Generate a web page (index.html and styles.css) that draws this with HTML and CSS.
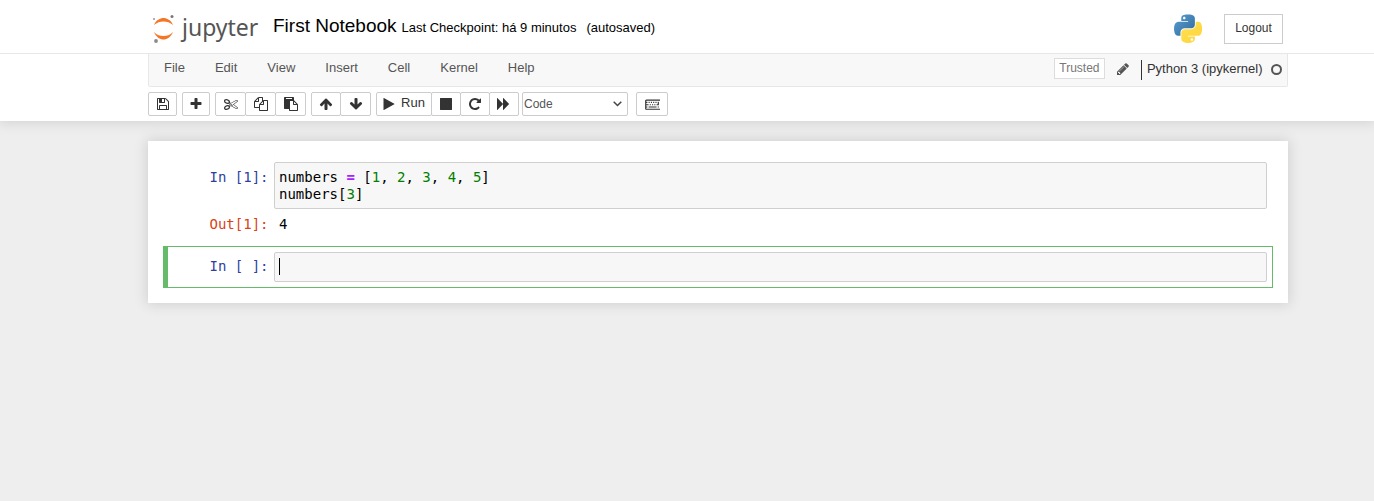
FILE: index.html
```html
<!DOCTYPE html>
<html lang="pt">
<head>
<meta charset="utf-8">
<title>First Notebook</title>
<link rel="stylesheet" href="styles.css">
</head>
<body>
<div class="top">
  <header class="header">
    <div class="wrap header-row">
      <div class="logo">
        <svg class="mark" viewBox="0 0 24 32" width="24" height="32">
          <path fill="#f37726" d="M4 14C6 9 10 7 13.500 7S21 9 23 14C20 11.500 17 10.500 13.500 10.500S7 11.500 4 14z"/>
          <path fill="#f37726" d="M4 21C7 24 10 25 13.500 25S20 24 23 21C21 26 17 28.500 13.500 28.500S6 26 4 21z"/>
          <circle cx="22" cy="5.500" r="1.500" fill="#767677"/>
          <circle cx="4" cy="8" r="1.100" fill="#9e9e9e"/>
          <circle cx="6" cy="30" r="1.900" fill="#8a8a8b"/>
        </svg>
        <span class="wordmark">jupyter</span>
      </div>
      <span class="filename">First Notebook</span>
      <span class="checkpoint">Last Checkpoint: há 9 minutos</span>
      <span class="autosave">(autosaved)</span>
      <svg class="python" viewBox="0 0 110.400 110" width="28" height="29">
        <defs>
          <linearGradient id="pyblue" x1="0" y1="0" x2="1" y2="1"><stop offset="0" stop-color="#5a9fd4"/><stop offset="1" stop-color="#306998"/></linearGradient>
          <linearGradient id="pyyellow" x1="0" y1="0" x2="1" y2="1"><stop offset="0" stop-color="#ffe052"/><stop offset="1" stop-color="#ffd43b"/></linearGradient>
        </defs>
        <path fill="url(#pyblue)" d="M54.919 0c-4.584.022-8.961.413-12.813 1.095C30.760 3.099 28.700 7.295 28.700 15.032v10.219h26.813v3.406H18.638c-7.793 0-14.616 4.684-16.750 13.594-2.462 10.213-2.571 16.586 0 27.250 1.906 7.938 6.457 13.594 14.250 13.594h9.219v-12.250c0-8.850 7.657-16.656 16.750-16.656h26.781c7.455 0 13.406-6.138 13.406-13.625v-25.531c0-7.266-6.130-12.725-13.406-13.937C64.282.328 59.502-.020 54.919 0zm-14.500 8.219c2.770 0 5.031 2.299 5.031 5.125 0 2.816-2.262 5.094-5.031 5.094-2.779 0-5.031-2.277-5.031-5.094 0-2.826 2.252-5.125 5.031-5.125z"/>
        <path fill="url(#pyyellow)" d="M85.638 28.657v11.906c0 9.231-7.826 17-16.750 17H42.107c-7.335 0-13.406 6.278-13.406 13.625v25.531c0 7.266 6.319 11.540 13.406 13.625 8.487 2.496 16.626 2.947 26.781 0 6.750-1.954 13.406-5.888 13.406-13.625V86.501H55.513v-3.406h40.188c7.793 0 10.696-5.436 13.406-13.594 2.799-8.399 2.680-16.476 0-27.250-1.926-7.757-5.604-13.594-13.406-13.594H85.638zM70.575 93.313c2.779 0 5.031 2.277 5.031 5.094 0 2.826-2.252 5.125-5.031 5.125-2.770 0-5.031-2.299-5.031-5.125 0-2.816 2.262-5.094 5.031-5.094z"/>
      </svg>
      <button class="logout" type="button">Logout</button>
    </div>
  </header>
  <nav class="wrap menubar">
    <span class="menu-item">File</span>
    <span class="menu-item">Edit</span>
    <span class="menu-item">View</span>
    <span class="menu-item">Insert</span>
    <span class="menu-item">Cell</span>
    <span class="menu-item">Kernel</span>
    <span class="menu-item">Help</span>
    <div class="kernel">
      <span class="trusted">Trusted</span>
      <svg class="pencil" viewBox="0 0 1792 1792" width="14" height="14"><path d="M491 1536l91-91-235-235-91 91v107h128v128h107zm523-928q0-22-22-22-10 0-17 7l-542 542q-7 7-7 17 0 22 22 22 10 0 17-7l542-542q7-7 7-17zm-54-192l416 416-832 832h-416v-416zm683 96q0 53-37 90l-166 166-416-416 166-165q36-38 90-38 53 0 91 38l235 234q37 39 37 91z"/></svg>
      <span class="kernel-name">Python 3 (ipykernel)</span>
      <span class="kernel-dot"></span>
    </div>
  </nav>
  <div class="wrap toolbar">
    <div class="group">
      <button class="tb w29" type="button"><svg viewBox="0 0 1792 1792" width="14" height="14"><path d="M512 1536h768v-384h-768v384zm896 0h128v-896q0-14-10-38.500t-20-34.500l-281-281q-10-10-34-20t-39-10v416q0 40-28 68t-68 28h-576q-40 0-68-28t-28-68v-416h-128v1280h128v-416q0-40 28-68t68-28h832q40 0 68 28t28 68v416zm-384-928v-320q0-13-9.500-22.500t-22.500-9.500h-192q-13 0-22.500 9.500t-9.500 22.500v320q0 13 9.500 22.500t22.500 9.500h192q13 0 22.500-9.500t9.500-22.500zm640 32v928q0 40-28 68t-68 28h-1344q-40 0-68-28t-28-68v-1344q0-40 28-68t68-28h928q40 0 88 20t76 48l280 280q28 28 48 76t20 88z"/></svg></button>
    </div>
    <div class="group">
      <button class="tb w28" type="button"><svg viewBox="0 0 1792 1792" width="14" height="14"><path d="M1600 736v192q0 40-28 68t-68 28h-416v416q0 40-28 68t-68 28h-192q-40 0-68-28t-28-68v-416h-416q-40 0-68-28t-28-68v-192q0-40 28-68t68-28h416v-416q0-40 28-68t68-28h192q40 0 68 28t28 68v416h416q40 0 68 28t28 68z"/></svg></button>
    </div>
    <div class="group">
      <button class="tb w31" type="button"><svg viewBox="0 0 1792 1792" width="14" height="14"><path d="M960 896q26 0 45 19t19 45-19 45-45 19-45-19-19-45 19-45 45-19zm300 64l507 398q28 20 25 56-5 35-35 51l-128 64q-13 7-29 7-17 0-31-8l-690-387-110 66q-8 4-12 5 14 49 10 97-7 77-56 147.500t-132 123.500q-132 84-277 84-136 0-222-78-90-84-79-207 7-76 56-147t131-124q132-84 278-84 83 0 151 31 9-13 22-22l122-73-122-73q-13-9-22-22-68 31-151 31-146 0-278-84-82-53-131-124t-56-147q-5-59 15.500-113t63.500-93q85-79 222-79 145 0 277 84 83 52 132 123t56 148q4 48-10 97 4 1 12 5l110 66 690-387q14-8 31-8 16 0 29 7l128 64q30 16 35 51 3 36-25 56zm-681-260q46-42 21-108t-106-117q-92-59-192-59-74 0-113 36-46 42-21 108t106 117q92 59 192 59 74 0 113-36zm-85 745q81-51 106-117t-21-108q-39-36-113-36-100 0-192 59-81 51-106 117t21 108q39 36 113 36 100 0 192-59zm178-613l96 58v-11q0-36 33-56l14-8-79-47-26 26q-3 3-10 11t-12 12q-2 2-4 3.500t-3 2.500zm224 224l96 32 736-576-128-64-768 431v113l-160 96 9 8q2 2 7 6 4 4 11 12t11 12l26 26zm704 416l128-64-520-408-177 138q-2 3-13 7z"/></svg></button>
      <button class="tb w31" type="button"><svg viewBox="0 0 1792 1792" width="14" height="14"><path d="M1696 384q40 0 68 28t28 68v1216q0 40-28 68t-68 28h-960q-40 0-68-28t-28-68v-288h-544q-40 0-68-28t-28-68v-672q0-40 20-88t48-76l408-408q28-28 76-48t88-20h416q40 0 68 28t28 68v328q68-40 128-40h416zm-544 213l-299 299h299v-299zm-640-384l-299 299h299v-299zm196 647l316-316v-416h-384v416q0 40-28 68t-68 28h-416v640h512v-256q0-40 20-88t48-76zm956 804v-1152h-384v416q0 40-28 68t-68 28h-416v640h896z"/></svg></button>
      <button class="tb w31" type="button"><svg viewBox="0 0 1792 1792" width="14" height="14"><path d="M768 1664h896v-640h-416q-40 0-68-28t-28-68v-416h-384v1152zm256-1440v-64q0-13-9.500-22.500t-22.500-9.500h-704q-13 0-22.500 9.500t-9.500 22.500v64q0 13 9.500 22.500t22.500 9.500h704q13 0 22.500-9.500t9.500-22.500zm256 672h299l-299-299v299zm512 128v672q0 40-28 68t-68 28h-960q-40 0-68-28t-28-68v-160h-544q-40 0-68-28t-28-68v-1344q0-40 28-68t68-28h1088q40 0 68 28t28 68v328q21 13 36 28l408 408q28 28 48 76t20 88z"/></svg></button>
    </div>
    <div class="group">
      <button class="tb w30" type="button"><svg viewBox="0 0 1792 1792" width="14" height="14"><path d="M1675 971q0 51-37 90l-75 75q-38 38-91 38-54 0-90-38l-294-293v704q0 52-37.500 84.500t-90.500 32.500h-128q-53 0-90.500-32.500t-37.500-84.500v-704l-294 293q-36 38-90 38t-90-38l-75-75q-38-38-38-90 0-53 38-91l651-651q35-37 90-37 54 0 91 37l651 651q37 39 37 91z"/></svg></button>
      <button class="tb w31" type="button"><svg viewBox="0 0 1792 1792" width="14" height="14"><path d="M1675 832q0 53-37 90l-651 652q-39 37-91 37-53 0-90-37l-651-652q-38-36-38-90 0-53 38-91l74-75q39-37 91-37 53 0 90 37l294 294v-704q0-52 38-90t90-38h128q52 0 90 38t38 90v704l294-294q37-37 90-37 52 0 91 37l75 75q37 39 37 91z"/></svg></button>
    </div>
    <div class="group run-group">
      <button class="tb run" type="button"><svg viewBox="0 0 1792 1792" width="14" height="14"><path d="M1576 927l-1328 738q-23 13-39.500 3t-16.500-36v-1472q0-26 16.500-36t39.500 3l1328 738q23 13 23 31t-23 31z"/></svg><span class="run-label">Run</span></button>
      <button class="tb" type="button"><svg viewBox="0 0 1792 1792" width="14" height="14"><path d="M1664 192v1408q0 26-19 45t-45 19h-1408q-26 0-45-19t-19-45v-1408q0-26 19-45t45-19h1408q26 0 45 19t19 45z"/></svg></button>
      <button class="tb" type="button"><svg viewBox="0 0 1792 1792" width="14" height="14"><path d="M1664 256v448q0 26-19 45t-45 19h-448q-42 0-59-40-17-39 14-69l138-138q-148-137-349-137-104 0-198.500 40.500t-164 110-110 164-40.500 198.500 40.500 198.500 110 164 164 110 198.500 40.500q119 0 225-52t179-147q7-10 23-12 15 0 25 9l137 138q9 8 9.500 20.500t-7.500 22.500q-109 132-264 204.500t-327 72.500q-156 0-298-61t-245-164-164-245-61-298 61-298 164-245 245-164 298-61q147 0 284.500 55.500t244.500 156.500l130-129q29-31 70-14 39 17 39 59z"/></svg></button>
      <button class="tb" type="button"><svg viewBox="0 0 1792 1792" width="14" height="14"><path d="M45 1651q-19 19-32 13t-13-32v-1472q0-26 13-32t32 13l710 710q9 9 13 19v-710q0-26 13-32t32 13l710 710q19 19 19 45t-19 45l-710 710q-19 19-32 13t-13-32v-710q-4 10-13 19z"/></svg></button>
    </div>
    <select class="cell-type"><option>Code</option></select>
    <button class="tb keyboard" type="button"><svg viewBox="0 0 1792 1792" width="16" height="16"><path d="M384 1184v96q0 16-16 16h-96q-16 0-16-16v-96q0-16 16-16h96q16 0 16 16zm128-256v96q0 16-16 16h-224q-16 0-16-16v-96q0-16 16-16h224q16 0 16 16zm-128-256v96q0 16-16 16h-96q-16 0-16-16v-96q0-16 16-16h96q16 0 16 16zm1024 512v96q0 16-16 16h-864q-16 0-16-16v-96q0-16 16-16h864q16 0 16 16zm-640-256v96q0 16-16 16h-96q-16 0-16-16v-96q0-16 16-16h96q16 0 16 16zm-128-256v96q0 16-16 16h-96q-16 0-16-16v-96q0-16 16-16h96q16 0 16 16zm384 256v96q0 16-16 16h-96q-16 0-16-16v-96q0-16 16-16h96q16 0 16 16zm-128-256v96q0 16-16 16h-96q-16 0-16-16v-96q0-16 16-16h96q16 0 16 16zm384 256v96q0 16-16 16h-96q-16 0-16-16v-96q0-16 16-16h96q16 0 16 16zm384 256v96q0 16-16 16h-96q-16 0-16-16v-96q0-16 16-16h96q16 0 16 16zm-512-512v96q0 16-16 16h-96q-16 0-16-16v-96q0-16 16-16h96q16 0 16 16zm256 0v96q0 16-16 16h-96q-16 0-16-16v-96q0-16 16-16h96q16 0 16 16zm256 0v352q0 16-16 16h-224q-16 0-16-16v-96q0-16 16-16h112v-240q0-16 16-16h96q16 0 16 16zm128 752v-896h-1536v896h1536zm128-896v896q0 53-37.500 90.500t-90.500 37.500h-1536q-53 0-90.500-37.500t-37.500-90.500v-896q0-53 37.500-90.500t90.500-37.500h1536q53 0 90.500 37.500t37.500 90.500z"/></svg></button>
  </div>
</div>
<main class="wrap notebook">
  <section class="cell">
    <div class="row">
      <div class="prompt in">In&nbsp;[1]:</div>
      <pre class="input">numbers <span class="op">=</span> [<span class="num">1</span>, <span class="num">2</span>, <span class="num">3</span>, <span class="num">4</span>, <span class="num">5</span>]
numbers[<span class="num">3</span>]</pre>
    </div>
    <div class="row output">
      <div class="prompt out">Out[1]:</div>
      <pre class="result">4</pre>
    </div>
  </section>
  <section class="cell selected">
    <div class="row">
      <div class="prompt in">In&nbsp;[&nbsp;]:</div>
      <pre class="input"><span class="caret"></span></pre>
    </div>
  </section>
</main>
</body>
</html>
```
FILE: styles.css
```css
* {
  box-sizing: border-box;
}

html,
body {
  height: 100%;
}

body {
  margin: 0;
  overflow: hidden;
  background: #eeeeee;
  color: #000;
  font-family: "Liberation Sans", Arial, sans-serif;
  font-size: 13px;
}

.wrap {
  width: 1140px;
  margin-left: 148px;
}

.top {
  height: 121px;
  background: #fff;
  box-shadow: 0 0 12px 1px rgba(87, 87, 87, 0.2);
}

.header {
  height: 54px;
  border-bottom: 1px solid #e7e7e7;
}

.header-row {
  display: flex;
  align-items: center;
  height: 53px;
  padding-right: 5px;
}

.logo {
  display: flex;
  align-items: center;
  width: 125px;
  padding-left: 2px;
}

.mark {
  flex: none;
  margin-top: 1px;
}

.wordmark {
  margin-left: 8px;
  font-family: "Noto Sans", sans-serif;
  font-size: 23px;
  line-height: 30px;
  color: #555;
}

.filename {
  font-size: 19px;
  margin-bottom: 1px;
}

.checkpoint {
  margin-left: 5px;
  margin-top: 2px;
}

.autosave {
  margin-left: 10px;
  margin-top: 2px;
}

.python {
  margin-left: auto;
  margin-right: 22px;
  margin-top: 4px;
}

.logout {
  width: 59px;
  height: 30px;
  padding: 0 0 2px;
  margin-top: 5px;
  background: #fff;
  border: 1px solid #ccc;
  border-radius: 0;
  color: #333;
  font: 12px "Liberation Sans", Arial, sans-serif;
}

.menubar {
  display: flex;
  align-items: center;
  height: 33px;
  padding-bottom: 5px;
  background: #f8f8f8;
  border: 1px solid #e7e7e7;
  border-top: 0;
  border-radius: 0 0 2px 2px;
}

.menu-item {
  padding: 0 15px;
  color: #555;
}

.kernel {
  display: flex;
  align-items: center;
  margin-left: auto;
}

.trusted {
  width: 51px;
  height: 21px;
  margin-top: 2px;
  background: #fff;
  border: 1px solid #ddd;
  color: #777;
  font-size: 12px;
  line-height: 19px;
  text-align: center;
}

.pencil {
  margin: 2px 11px 0 11px;
  fill: #555;
}

.kernel-name {
  height: 20px;
  margin-top: 5px;
  padding-left: 5px;
  border-left: 1px solid #333;
  color: #333;
  line-height: 17px;
}

.kernel-dot {
  width: 11px;
  height: 11px;
  margin: 4px 5px 0 8.500px;
  border: 2px solid #555;
  border-radius: 50%;
}

.toolbar {
  display: flex;
  align-items: center;
  gap: 5px;
  height: 34px;
}

.group {
  display: flex;
}

.tb {
  display: flex;
  align-items: center;
  justify-content: center;
  height: 24px;
  padding: 0;
  background: #fff;
  border: 1px solid #ccc;
  border-radius: 2px;
  color: #333;
  fill: #333;
  font: 13px "Liberation Sans", Arial, sans-serif;
}

.group .tb + .tb {
  margin-left: -1px;
}

.w28 { width: 28px; }
.w29 { width: 29px; }
.w30 { width: 30px; }
.w31 { width: 31px; }

.run-group .tb {
  width: 30px;
}

.run-group .run {
  width: 56px;
  gap: 5px;
  padding-right: 1px;
}

.run-label {
  margin-bottom: 3px;
}

.cell-type {
  appearance: none;
  width: 106px;
  height: 24px;
  margin-left: -2px;
  padding: 0 0 0 1px;
  background: #fff url("data:image/svg+xml,%3Csvg xmlns='http://www.w3.org/2000/svg' width='9' height='6'%3E%3Cpath d='M.7.7l3.800 3.800L8.300.7' fill='none' stroke='%23444' stroke-width='1.500'/%3E%3C/svg%3E") no-repeat right 5px center;
  border: 1px solid #ccc;
  border-radius: 2px;
  color: #555;
  font: 12px "Liberation Sans", Arial, sans-serif;
}

.keyboard {
  width: 32px;
  margin-left: 3px;
}

.notebook {
  margin-top: 20px;
  padding: 15px;
  background: #fff;
  box-shadow: 0 0 12px 1px rgba(87, 87, 87, 0.2);
}

.cell {
  position: relative;
  padding: 5px;
  border: 1px solid transparent;
}

.selected {
  border-color: #66bb6a;
}

.selected::before {
  content: "";
  position: absolute;
  top: -1px;
  bottom: -1px;
  left: -1px;
  width: 5px;
  background: #66bb6a;
}

.row {
  display: flex;
}

.prompt {
  flex: none;
  width: 105px;
  padding: 7px 5.500px 0 0;
  font: 14px/17px "DejaVu Sans Mono", monospace;
  text-align: right;
}

.selected .prompt {
  padding-top: 6px;
}

.in {
  color: #303f9f;
}

.out {
  color: #d84315;
}

.input {
  flex: 1;
  margin: 0;
  padding: 6px 4px 5px;
  background: #f7f7f7;
  border: 1px solid #cfcfcf;
  border-radius: 2px;
  font: 14px/17px "DejaVu Sans Mono", monospace;
}

.op {
  color: #aa22ff;
  font-weight: bold;
}

.num {
  color: #008000;
}

.caret {
  display: inline-block;
  height: 17px;
  margin-top: -1px;
  vertical-align: top;
  border-left: 1px solid #000;
}

.output {
  height: 31px;
}

.result {
  margin: 0;
  padding: 7px 5px 0;
  font: 14px/17px "DejaVu Sans Mono", monospace;
}
```
